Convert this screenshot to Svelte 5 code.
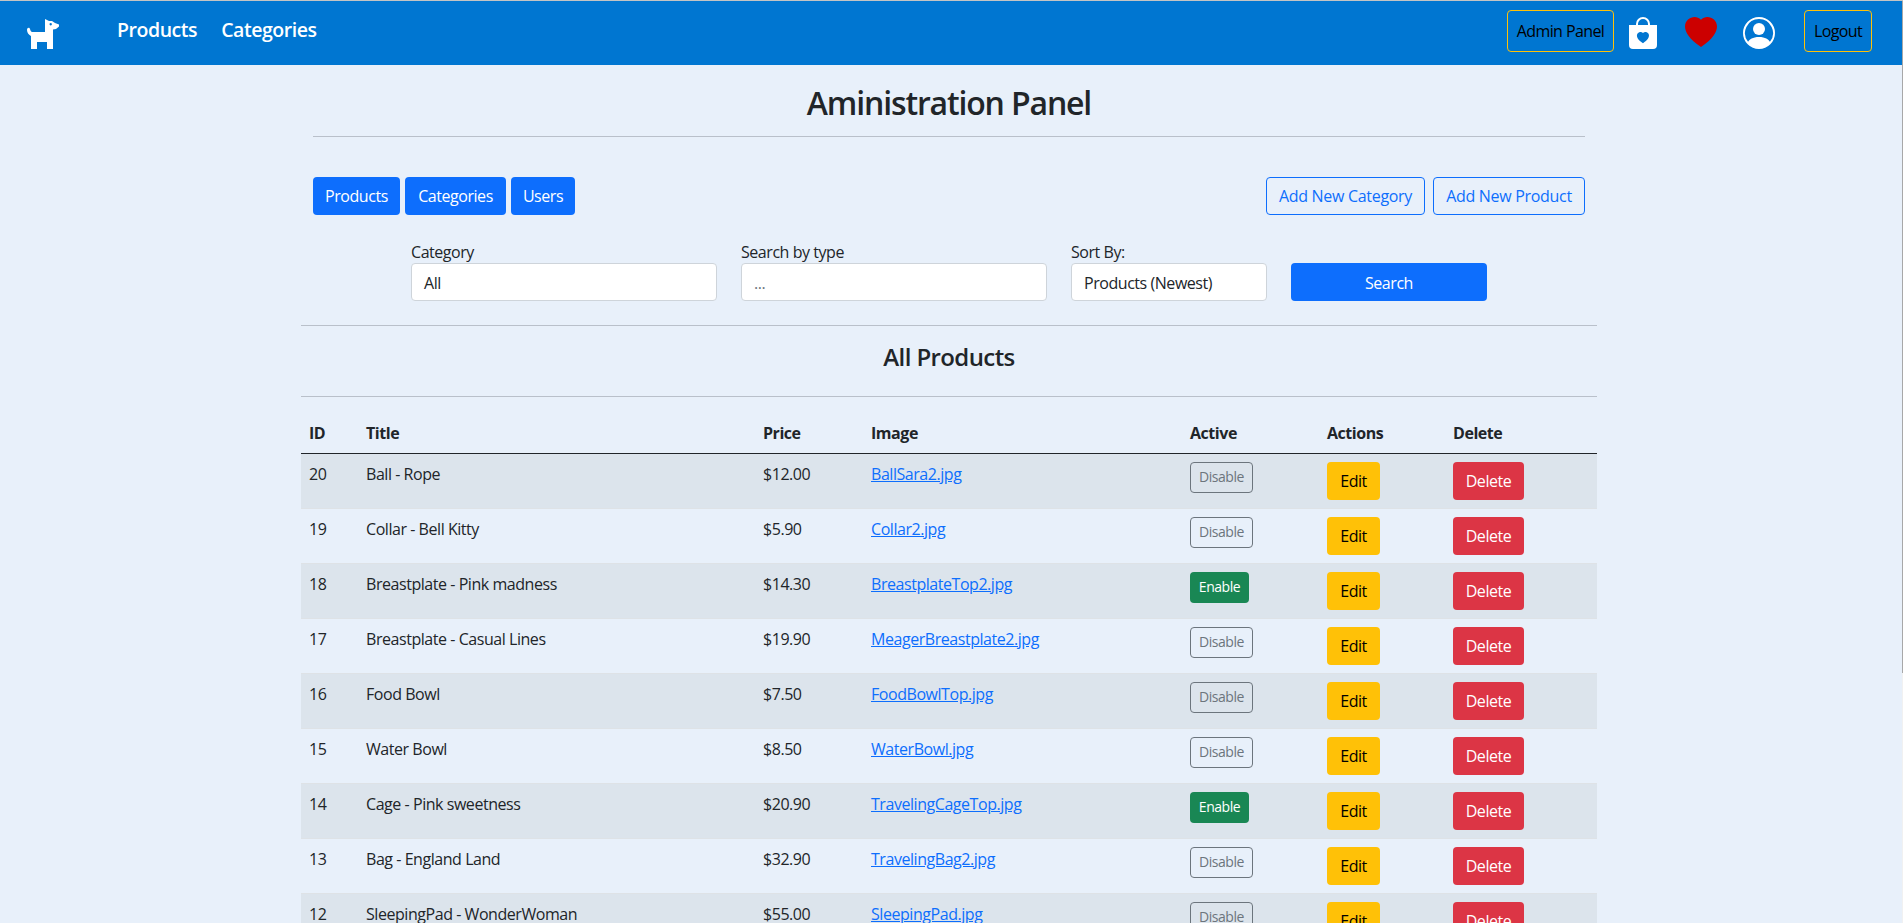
<script>
  const rows = [
    [20, 'Ball - Rope', '$12.00', 'BallSara2.jpg', false],
    [19, 'Collar - Bell Kitty', '$5.90', 'Collar2.jpg', false],
    [18, 'Breastplate - Pink madness', '$14.30', 'BreastplateTop2.jpg', true],
    [17, 'Breastplate - Casual Lines', '$19.90', 'MeagerBreastplate2.jpg', false],
    [16, 'Food Bowl', '$7.50', 'FoodBowlTop.jpg', false],
    [15, 'Water Bowl', '$8.50', 'WaterBowl.jpg', false],
    [14, 'Cage - Pink sweetness', '$20.90', 'TravelingCageTop.jpg', true],
    [13, 'Bag - England Land', '$32.90', 'TravelingBag2.jpg', false],
    [12, 'SleepingPad - WonderWoman', '$55.00', 'SleepingPad.jpg', false]
  ];
</script>

<header class="navbar">
  <a class="brand" href="#home" aria-label="Home">
    <svg width="34" height="32" viewBox="26 18 34 32" fill="#fff">
      <path fill-rule="evenodd" d="M45 19 L49 21 L52 21 L55 23 L59 24.5 L59 26.5 L56 29 L53 29.5 L53 49 L47 49 L47 42 L37 42 L37 49 L31 49 L31 36 C29 35 27 33 27 30 C27 27.5 29.5 27 30 29 C30.5 31.5 31.5 32 33 32 L45 32 L45 28 Z M50.7 23 a1.2 1.2 0 1 0 .01 0 Z"/>
    </svg>
  </a>
  <nav class="links">
    <a href="#products">Products</a>
    <a href="#categories">Categories</a>
  </nav>
  <div class="right">
    <button class="nav-btn admin">Admin Panel</button>
    <svg class="ic bag" width="32" height="32" viewBox="0 0 16 16" fill="#fff"><path d="M11.5 4v-.5a3.5 3.5 0 1 0-7 0V4H1v10a2 2 0 0 0 2 2h10a2 2 0 0 0 2-2V4h-3.5ZM8 1a2.5 2.5 0 0 1 2.5 2.5V4h-5v-.5A2.5 2.5 0 0 1 8 1Zm0 6.993c1.664-1.711 5.825 1.283 0 5.132-5.825-3.85-1.664-6.843 0-5.132Z"/></svg>
    <svg class="ic heart" width="32" height="32" viewBox="0 0 16 16" fill="#cc0000"><path fill-rule="evenodd" d="M8 1.314C12.438-3.248 23.534 4.735 8 15-7.534 4.736 3.562-3.248 8 1.314z"/></svg>
    <svg class="ic person" width="32" height="32" viewBox="0 0 16 16" fill="#fff"><path d="M11 6a3 3 0 1 1-6 0 3 3 0 0 1 6 0z"/><path fill-rule="evenodd" d="M0 8a8 8 0 1 1 16 0A8 8 0 0 1 0 8zm8-7a7 7 0 0 0-5.468 11.37C3.242 11.226 4.805 10 8 10s4.757 1.225 5.468 2.37A7 7 0 0 0 8 1z"/></svg>
    <button class="nav-btn logout">Logout</button>
  </div>
</header>

<main class="container">
  <h1>Aministration Panel</h1>
  <div class="inner">
    <hr class="first" />
    <div class="toolbar">
      <div class="group">
        <button class="btn primary w-products">Products</button>
        <button class="btn primary w-categories">Categories</button>
        <button class="btn primary w-users">Users</button>
      </div>
      <div class="group add">
        <button class="btn outline w-addcat">Add New Category</button>
        <button class="btn outline w-addprod">Add New Product</button>
      </div>
    </div>
    <form class="filters">
      <label class="f-cat">Category<span class="field">All</span></label>
      <label class="f-search">Search by type<span class="field ph">...</span></label>
      <label class="f-sort">Sort By:<span class="field">Products (Newest)</span></label>
      <button type="button" class="btn primary search">Search</button>
    </form>
  </div>
  <hr class="full" />
  <h4>All Products</h4>
  <hr class="full second" />
  <table>
    <thead>
      <tr><th>ID</th><th>Title</th><th>Price</th><th>Image</th><th>Active</th><th>Actions</th><th>Delete</th></tr>
    </thead>
    <tbody>
      {#each rows as r}
        <tr>
          <td>{r[0]}</td>
          <td>{r[1]}</td>
          <td>{r[2]}</td>
          <td><a href="#img">{r[3]}</a></td>
          <td>
            {#if r[4]}
              <button class="btn sm enable">Enable</button>
            {:else}
              <button class="btn sm disable">Disable</button>
            {/if}
          </td>
          <td><button class="btn edit">Edit</button></td>
          <td><button class="btn del">Delete</button></td>
        </tr>
      {/each}
    </tbody>
  </table>
</main>
<div class="scroll" aria-hidden="true"><div class="thumb"></div></div>

<style>
  :global(html), :global(body) {
    height: 923px;
    overflow: hidden;
  }
  :global(body) {
    margin: 0;
    background: #e8f0fa;
    color: #212529;
    font-family: "Open Sans", "Noto Sans", sans-serif;
    font-size: 16px;
    line-height: 24px;
    letter-spacing: -0.45px;
  }
  button {
    font: inherit;
    letter-spacing: inherit;
    cursor: pointer;
    white-space: nowrap;
  }
  .navbar {
    height: 64px;
    border-top: 1px solid #c4c4c4;
    background: #0076d1;
    display: flex;
    align-items: center;
    padding: 0 31px 0 26px;
    box-sizing: content-box;
  }
  .brand {
    display: flex;
    margin-top: 2px;
  }
  .links {
    margin-left: 57px;
    display: flex;
    gap: 24px;
    margin-bottom: 6px;
  }
  .links a {
    color: #fff;
    text-decoration: none;
    font-size: 19.5px;
    font-weight: 600;
  }
  .right {
    margin-left: auto;
    display: flex;
    align-items: center;
  }
  .nav-btn {
    height: 42px;
    background: transparent;
    border: 1px solid #ffc107;
    border-radius: 4px;
    color: #000;
    padding: 0;
    margin-bottom: 4px;
    letter-spacing: -0.6px;
  }
  .admin { width: 107px; }
  .logout { width: 68px; margin-left: 29px; }
  .ic { flex: none; }
  .bag { margin-left: 13px; }
  .heart { margin-left: 26px; }
  .person { margin-left: 26px; }

  .container {
    width: 1296px;
    margin: 0 auto;
    position: relative;
    left: -2.5px;
  }
  h1 {
    margin: 0;
    padding-top: 19px;
    font-size: 32px;
    line-height: 38px;
    font-weight: 600;
    letter-spacing: -1.15px;
    text-align: center;
  }
  .inner { padding: 0 12px; }
  hr {
    border: 0;
    border-top: 1px solid #b9c0ca;
    margin: 0;
  }
  hr.first { margin-top: 14px; }
  .toolbar {
    display: flex;
    justify-content: space-between;
    margin-top: 40px;
  }
  .group { display: flex; gap: 5px; }
  .group.add { gap: 8px; }
  .btn {
    height: 38px;
    border-radius: 4px;
    border: 1px solid transparent;
    padding: 0 12px;
    box-sizing: border-box;
  }
  .w-products { width: 87px; padding: 0; }
  .w-categories { width: 101px; padding: 0; }
  .w-users { width: 64px; padding: 0; }
  .w-addcat { width: 159px; padding: 0; letter-spacing: -0.3px; }
  .w-addprod { width: 152px; padding: 0; letter-spacing: -0.3px; }
  .primary { background: #0d6efd; color: #fff; }
  .outline { background: transparent; border-color: #0d6efd; color: #0d6efd; }
  .filters {
    display: flex;
    align-items: flex-end;
    padding-left: 98px;
    margin-top: 26px;
  }
  label {
    display: flex;
    flex-direction: column;
    line-height: 22px;
  }
  .f-cat { width: 306px; }
  .f-search { width: 306px; margin-left: 24px; }
  .f-sort { width: 196px; margin-left: 24px; }
  .field {
    height: 38px;
    box-sizing: border-box;
    display: flex;
    align-items: center;
    background: #fff;
    border: 1px solid #ced4da;
    border-radius: 4px;
    padding: 2px 12px 0;
    color: #212529;
  }
  .field.ph { color: #6c757d; }
  .search { width: 196px; margin-left: 24px; padding-top: 2px; }
  hr.full { margin-top: 24px; }
  h4 {
    margin: 0;
    padding-top: 16px;
    font-size: 24px;
    line-height: 29px;
    font-weight: 600;
    letter-spacing: -0.6px;
    text-align: center;
  }
  hr.second { margin-top: 25px; }
  table {
    width: 1296px;
    table-layout: fixed;
    border-collapse: collapse;
    margin-top: 15px;
  }
  th {
    text-align: left;
    font-weight: 700;
    padding: 9px 8px 7px;
    height: 41px;
    box-sizing: border-box;
    border-bottom: 1px solid #212529;
  }
  th:nth-child(1) { width: 57px; }
  th:nth-child(2) { width: 397px; }
  th:nth-child(3) { width: 108px; }
  th:nth-child(4) { width: 319px; }
  th:nth-child(5) { width: 137px; }
  th:nth-child(6) { width: 126px; }
  th:nth-child(7) { width: 152px; }
  td {
    padding: 8px;
    height: 55px;
    box-sizing: border-box;
    vertical-align: top;
    border-bottom: 1px solid #dee2e6;
  }
  tbody tr:nth-child(odd) td { background: #dce4ec; }
  td a { color: #0d6efd; }
  .sm {
    height: 31px;
    padding: 0 8px;
    font-size: 14px;
    display: block;
  }
  .enable { background: #198754; color: #fff; width: 59px; padding: 0; }
  .disable { background: transparent; border-color: #6c757d; color: #6c757d; width: 63px; padding: 0; }
  .edit { background: #ffc107; color: #000; width: 53px; padding: 0; }
  .del { background: #dc3545; color: #fff; width: 71px; padding: 0; }
  .scroll {
    position: fixed;
    top: 1px;
    right: 0;
    width: 1px;
    height: 922px;
    background: #f1f1f1;
  }
  .thumb { height: 672px; background: #a8a8a8; }
</style>
